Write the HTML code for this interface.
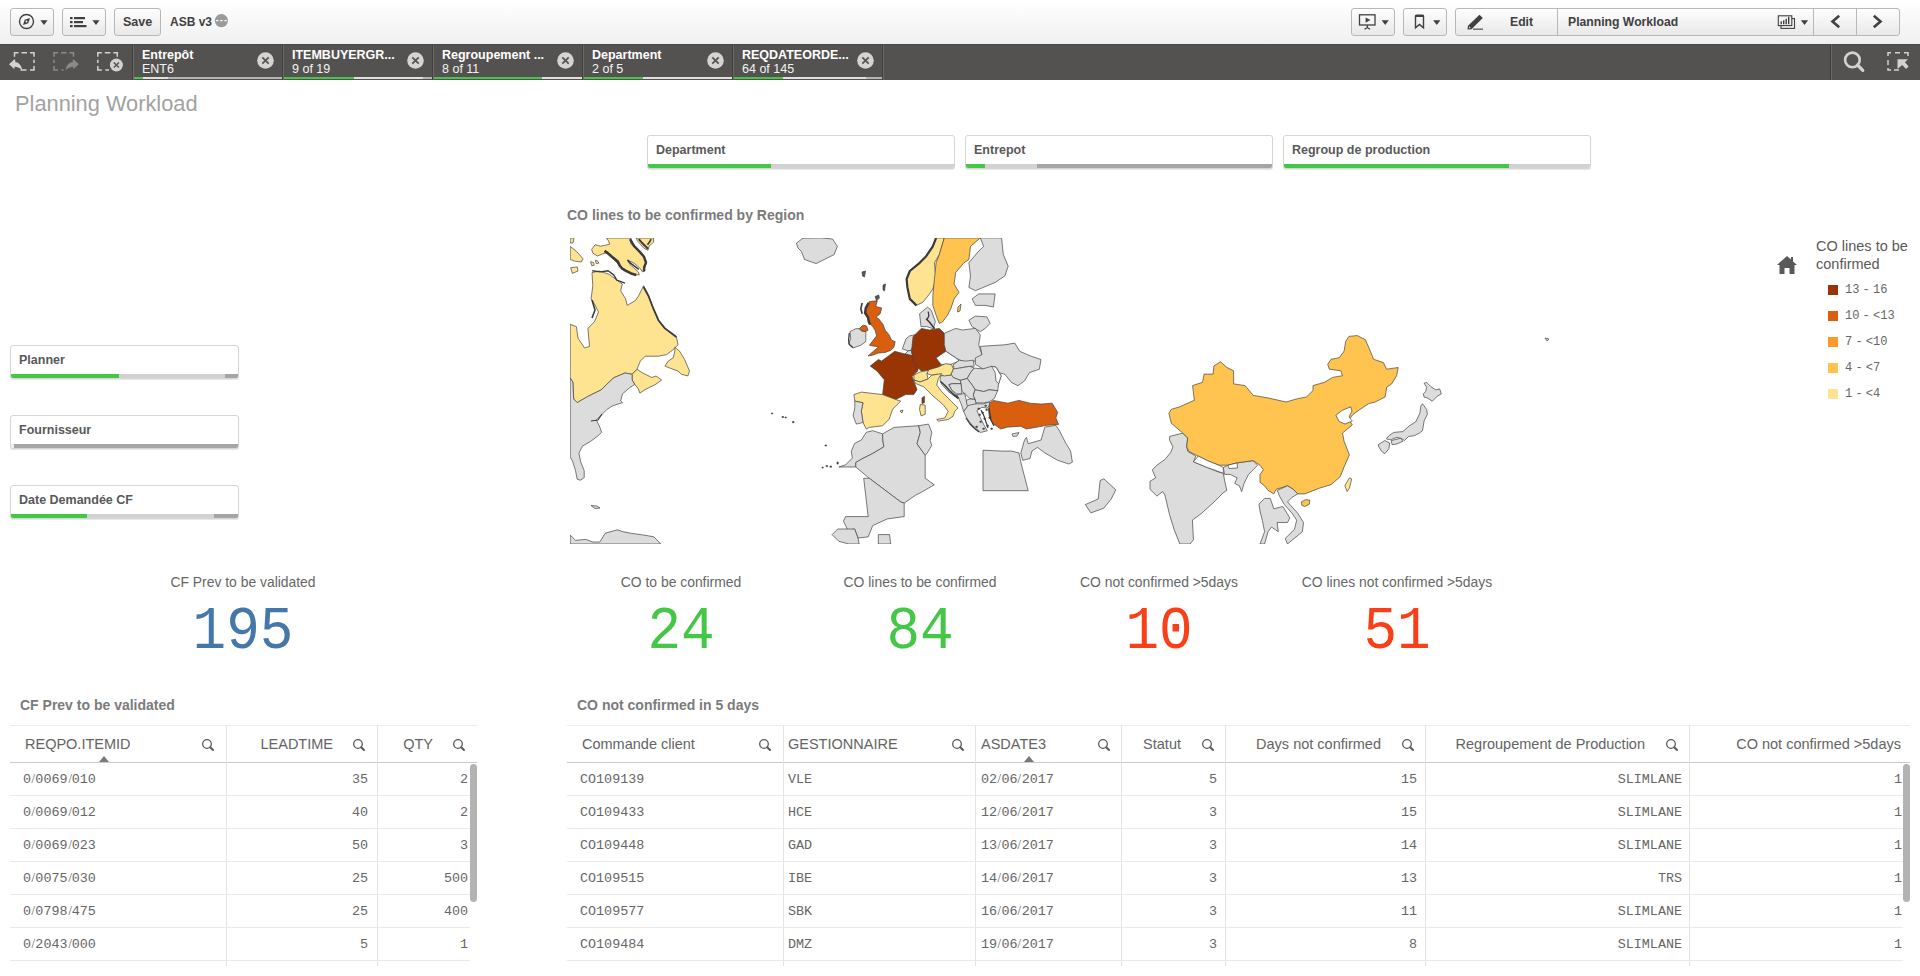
<!DOCTYPE html><html><head><meta charset="utf-8"><style>
*{box-sizing:border-box;margin:0;padding:0}
html,body{width:1920px;height:976px;overflow:hidden;background:#fff;font-family:"Liberation Sans",sans-serif;color:#595959}
body{position:relative}
.abs{position:absolute}
#top{position:absolute;left:0;top:0;width:1920px;height:44px;background:linear-gradient(#ffffff,#f0f0f0)}
.btn{position:absolute;top:8px;height:28px;border:1px solid #b8b8b8;border-radius:3px;background:linear-gradient(#fefefe,#e8e8e8)}
.caret{position:absolute;width:0;height:0;border-left:4px solid transparent;border-right:4px solid transparent;border-top:5px solid #404040}
#sel{position:absolute;left:0;top:44px;width:1920px;height:36px;background:#545250}
.tab{position:absolute;top:0;width:149px;height:36px;color:#fff}
.tab .t1{position:absolute;left:8px;top:4px;font-size:12.5px;font-weight:bold;white-space:nowrap}
.tab .t2{position:absolute;left:8px;top:18px;font-size:12.5px;white-space:nowrap;color:#f2f2f2}
.tab .x{position:absolute;left:124px;top:8px;width:17px;height:17px;border-radius:50%;background:#d2d2d2}
.tab .bar{position:absolute;left:0;top:33px;height:2px;width:148px;background:#b4b4b4;overflow:hidden}
.fp{position:absolute;height:34px;border:1px solid #d6d6d6;border-radius:3px;background:#fff;box-shadow:0 1px 1px rgba(0,0,0,.10)}
.fp .lbl{position:absolute;left:8px;top:7px;font-size:12.5px;font-weight:bold;color:#595959;white-space:nowrap}
.fp .b{position:absolute;left:0;bottom:0;height:4px;right:0;background:#d2d2d2;border-radius:0 0 2px 2px;overflow:hidden}
.fp .b i{position:absolute;top:0;height:4px}
.kl{position:absolute;font-size:13.9px;color:#666;white-space:nowrap}
.kn{position:absolute;font-family:"Liberation Mono",monospace;font-size:56px;white-space:nowrap;line-height:56px;transform:scaleY(1.1);transform-origin:0 0}
.ttl{position:absolute;font-size:14px;font-weight:bold;color:#7b7b7b;white-space:nowrap}
.hd{position:absolute;font-size:14.5px;color:#646464;white-space:nowrap}
.cell{position:absolute;font-family:"Liberation Mono",monospace;font-size:13.4px;color:#666666;white-space:nowrap}
.hl{position:absolute;height:1px;background:#e6e6e6}
.vl{position:absolute;width:1px;background:#e6e6e6}
</style></head><body>
<div id="top">
<div class="btn" style="left:10px;width:44px"></div>
<div class="btn" style="left:62px;width:44px"></div>
<div class="btn" style="left:114px;width:47px"></div>
<div class="btn" style="left:1351px;width:44px"></div>
<div class="btn" style="left:1403px;width:44px"></div>
<div class="btn" style="left:1455px;width:445px"></div>
<div class="abs" style="left:123px;top:15px;font-size:12.5px;font-weight:bold;color:#404040;white-space:nowrap">Save</div>
<div class="abs" style="left:170px;top:15px;font-size:12px;font-weight:bold;color:#404040;white-space:nowrap">ASB v3</div>
<div class="abs" style="left:1510px;top:15px;font-size:12.2px;font-weight:bold;color:#404040;white-space:nowrap">Edit</div>
<div class="abs" style="left:1568px;top:15px;font-size:12.2px;font-weight:bold;color:#404040;white-space:nowrap">Planning Workload</div>
<div class="abs" style="left:1557px;top:9px;width:1px;height:26px;background:#b8b8b8"></div>
<div class="abs" style="left:1813px;top:9px;width:1px;height:26px;background:#b8b8b8"></div>
<div class="abs" style="left:1856px;top:9px;width:1px;height:26px;background:#b8b8b8"></div>
<svg class="abs" style="left:0;top:0" width="1920" height="44" viewBox="0 0 1920 44"><circle cx="26.5" cy="21.5" r="7" fill="none" stroke="#404040" stroke-width="1.4"/><path d="M30,17.9 L28.3,23.3 L23,25.1 L24.7,19.7 Z" fill="#404040"/><circle cx="26.5" cy="21.5" r="0.9" fill="#fff"/><path d="M40.4,20.2 L47.6,20.2 L44,24.9 Z" fill="#404040"/><rect x="70" y="17" width="2.6" height="2.2" fill="#404040"/><rect x="74" y="17" width="11" height="2.2" fill="#404040"/><rect x="70" y="21" width="2.6" height="2.2" fill="#404040"/><rect x="74" y="21" width="9" height="2.2" fill="#404040"/><rect x="70" y="25" width="2.6" height="2.2" fill="#404040"/><rect x="74" y="25" width="12.5" height="2.2" fill="#404040"/><path d="M92.4,20.2 L99.6,20.2 L96,24.9 Z" fill="#404040"/><circle cx="221.4" cy="20.6" r="6.6" fill="#9a9a9a"/><rect x="216" y="20" width="2.4" height="1.2" fill="#fff"/><rect x="220.2" y="20" width="2.4" height="1.2" fill="#fff"/><rect x="224.4" y="20" width="2.4" height="1.2" fill="#fff"/><rect x="1359.5" y="14.8" width="15.5" height="10.2" fill="none" stroke="#404040" stroke-width="1.3"/><path d="M1365.6,17.4 L1370.4,20.1 L1365.6,22.8 Z" fill="#404040"/><path d="M1367.3,25 L1367.3,27.5 M1364.6,29.3 L1367.3,27.5 L1370,29.3" stroke="#404040" stroke-width="1.3" fill="none"/><path d="M1381.6000000000001,20.2 L1388.8,20.2 L1385.2,24.9 Z" fill="#404040"/><path d="M1414.8,16 Q1414.8,14.5 1416.3,14.5 L1422.7,14.5 Q1424.2,14.5 1424.2,16 L1424.2,29.2 L1419.5,25.5 L1414.8,29.2 Z M1416.2,17 L1416.2,26.3 L1419.5,23.6 L1422.8,26.3 L1422.8,17 Z" fill="#404040" fill-rule="evenodd"/><path d="M1433.2,20.2 L1440.3999999999999,20.2 L1436.8,24.9 Z" fill="#404040"/><path d="M1479.5,14.8 L1482.8,18.1 L1471.5,29.2 L1467.5,29.6 L1468,25.8 Z" fill="#404040"/><path d="M1469.5,26.2 L1470.6,28 L1468.9,28.3 Z" fill="#eee"/><rect x="1473" y="28.6" width="10" height="1.1" fill="#404040"/><rect x="1781" y="18.6" width="13.5" height="9.8" fill="#f4f4f4" stroke="#404040" stroke-width="1.1"/><rect x="1778.3" y="15.8" width="13.5" height="9.8" fill="#f4f4f4" stroke="#404040" stroke-width="1.1"/><rect x="1780.5" y="21.3" width="1.4" height="3" fill="#404040"/><rect x="1783" y="20.3" width="1.4" height="4" fill="#404040"/><rect x="1785.5" y="18.8" width="1.4" height="5.5" fill="#404040"/><rect x="1788" y="16.8" width="1.4" height="7.5" fill="#404040"/><path d="M1800.9,20.2 L1808.1,20.2 L1804.5,24.9 Z" fill="#404040"/><path d="M1839.2,15.8 L1832.5,21.5 L1839.2,27.2" fill="none" stroke="#404040" stroke-width="2.6"/><path d="M1873.8,15.8 L1880.5,21.5 L1873.8,27.2" fill="none" stroke="#404040" stroke-width="2.6"/></svg>
</div>
<div id="sel">
<div class="tab" style="left:134px"><div class="t1">Entrepôt</div><div class="t2">ENT6</div><svg class="abs" style="left:123px;top:8px" width="17" height="17" viewBox="0 0 17 17"><circle cx="8.5" cy="8.5" r="8.3" fill="#d4d4d4"/><path d="M5.3,5.3 L11.7,11.7 M11.7,5.3 L5.3,11.7" stroke="#545250" stroke-width="1.7"/></svg><div class="bar"><i class="abs" style="left:0px;top:0;width:9px;height:3px;background:#46c646"></i><i class="abs" style="left:9px;top:0;width:25px;height:3px;background:#e0e0e0"></i></div></div>
<div class="abs" style="left:132px;top:0;width:1px;height:36px;background:#434140"></div><div class="abs" style="left:133px;top:0;width:1px;height:36px;background:#6b6967"></div>
<div class="tab" style="left:284px"><div class="t1">ITEMBUYERGR...</div><div class="t2">9 of 19</div><svg class="abs" style="left:123px;top:8px" width="17" height="17" viewBox="0 0 17 17"><circle cx="8.5" cy="8.5" r="8.3" fill="#d4d4d4"/><path d="M5.3,5.3 L11.7,11.7 M11.7,5.3 L5.3,11.7" stroke="#545250" stroke-width="1.7"/></svg><div class="bar"><i class="abs" style="left:0px;top:0;width:70px;height:3px;background:#46c646"></i><i class="abs" style="left:70px;top:0;width:69px;height:3px;background:#e0e0e0"></i></div></div>
<div class="abs" style="left:282px;top:0;width:1px;height:36px;background:#434140"></div><div class="abs" style="left:283px;top:0;width:1px;height:36px;background:#6b6967"></div>
<div class="tab" style="left:434px"><div class="t1">Regroupement ...</div><div class="t2">8 of 11</div><svg class="abs" style="left:123px;top:8px" width="17" height="17" viewBox="0 0 17 17"><circle cx="8.5" cy="8.5" r="8.3" fill="#d4d4d4"/><path d="M5.3,5.3 L11.7,11.7 M11.7,5.3 L5.3,11.7" stroke="#545250" stroke-width="1.7"/></svg><div class="bar"><i class="abs" style="left:0px;top:0;width:108px;height:3px;background:#46c646"></i><i class="abs" style="left:108px;top:0;width:40px;height:3px;background:#e0e0e0"></i></div></div>
<div class="abs" style="left:432px;top:0;width:1px;height:36px;background:#434140"></div><div class="abs" style="left:433px;top:0;width:1px;height:36px;background:#6b6967"></div>
<div class="tab" style="left:584px"><div class="t1">Department</div><div class="t2">2 of 5</div><svg class="abs" style="left:123px;top:8px" width="17" height="17" viewBox="0 0 17 17"><circle cx="8.5" cy="8.5" r="8.3" fill="#d4d4d4"/><path d="M5.3,5.3 L11.7,11.7 M11.7,5.3 L5.3,11.7" stroke="#545250" stroke-width="1.7"/></svg><div class="bar"><i class="abs" style="left:0px;top:0;width:59px;height:3px;background:#46c646"></i><i class="abs" style="left:59px;top:0;width:90px;height:3px;background:#e0e0e0"></i></div></div>
<div class="abs" style="left:582px;top:0;width:1px;height:36px;background:#434140"></div><div class="abs" style="left:583px;top:0;width:1px;height:36px;background:#6b6967"></div>
<div class="tab" style="left:734px"><div class="t1">REQDATEORDE...</div><div class="t2">64 of 145</div><svg class="abs" style="left:123px;top:8px" width="17" height="17" viewBox="0 0 17 17"><circle cx="8.5" cy="8.5" r="8.3" fill="#d4d4d4"/><path d="M5.3,5.3 L11.7,11.7 M11.7,5.3 L5.3,11.7" stroke="#545250" stroke-width="1.7"/></svg><div class="bar"><i class="abs" style="left:0px;top:0;width:49px;height:3px;background:#46c646"></i><i class="abs" style="left:49px;top:0;width:83px;height:3px;background:#e0e0e0"></i></div></div>
<div class="abs" style="left:732px;top:0;width:1px;height:36px;background:#434140"></div><div class="abs" style="left:733px;top:0;width:1px;height:36px;background:#6b6967"></div>
<div class="abs" style="left:882px;top:0;width:1px;height:36px;background:#434140"></div><div class="abs" style="left:883px;top:0;width:1px;height:36px;background:#6b6967"></div>
<div class="abs" style="left:0;top:0;width:1920px;height:1px;background:#4a4846"></div>
<div class="abs" style="left:1830px;top:0;width:1px;height:36px;background:#3f3e3d"></div><div class="abs" style="left:1831px;top:0;width:1px;height:36px;background:#6a6866"></div>
<svg class="abs" style="left:0;top:0" width="1920" height="36" viewBox="0 44 1920 36"><path d="M14.5,56.8 L14.5,52.8 L18.5,52.8 M21.5,52.8 L27,52.8 M30,52.8 L34,52.8 L34,56.8 M14.5,59.8 L14.5,63 M34,59.8 L34,63" fill="none" stroke="#d2d2d2" stroke-width="1.5"/><path d="M34,66 L34,70 L30,70 M26.5,70 L20.5,70" fill="none" stroke="#d2d2d2" stroke-width="1.5"/><path d="M9,64.2 L14.5,59.3 L14.5,62 Q21,62 22.3,70.5 Q19,66.8 14.5,66.8 L14.5,69.2 Z" fill="#d2d2d2"/><path d="M54,56.8 L54,52.8 L58,52.8 M61,52.8 L66.5,52.8 M69.5,52.8 L73.5,52.8 L73.5,56.8 M54,59.8 L54,63 M73.5,59.8 L73.5,63" fill="none" stroke="#8c8a88" stroke-width="1.5"/><path d="M54,66 L54,70 L58,70 M61.5,70 L63.5,70" fill="none" stroke="#8c8a88" stroke-width="1.5"/><path d="M78.8,64.2 L73.3,59.3 L73.3,62 Q66.8,62 65.5,70.5 Q68.8,66.8 73.3,66.8 L73.3,69.2 Z" fill="#8c8a88"/><path d="M97.8,56.8 L97.8,52.8 L101.8,52.8 M104.8,52.8 L110.3,52.8 M113.3,52.8 L117.3,52.8 L117.3,56.8 M97.8,59.8 L97.8,63 M117.3,59.8 L117.3,63" fill="none" stroke="#d2d2d2" stroke-width="1.5"/><path d="M97.8,66 L97.8,70 L101.8,70 M105.3,70 L109,70" fill="none" stroke="#d2d2d2" stroke-width="1.5"/><circle cx="116.4" cy="65" r="6.5" fill="#d2d2d2"/><path d="M113.8,62.4 L119,67.6 M119,62.4 L113.8,67.6" stroke="#545250" stroke-width="1.4"/><circle cx="1852.4" cy="59.9" r="7.3" fill="none" stroke="#d2d2d2" stroke-width="2.6"/><path d="M1857.5,65 L1862.8,70.3" stroke="#d2d2d2" stroke-width="3.2" stroke-linecap="round"/><path d="M1888,56 L1888,52.8 L1891,52.8 M1895,52.8 L1900,52.8 M1904,52.8 L1908,52.8 L1908,56 M1888,60 L1888,65 M1888,68 L1888,70 L1891,70 M1894,70 L1899,70" fill="none" stroke="#d2d2d2" stroke-width="1.5"/><path d="M1897.5,59.2 L1907.8,59.2 L1905,62.3 L1908.6,66.5 L1906,69 L1902.2,65 L1897.5,69 Z" fill="#d2d2d2"/></svg>
</div>
<div class="abs" style="left:15px;top:91px;font-size:21.8px;color:#a2a2a2;white-space:nowrap">Planning Workload</div>
<div class="fp" style="left:647px;top:135px;width:308px"><div class="lbl">Department</div><div class="b"><i style="left:0px;width:123px;background:#46c646"></i></div></div>
<div class="fp" style="left:965px;top:135px;width:308px"><div class="lbl">Entrepot</div><div class="b"><i style="left:0px;width:19px;background:#46c646"></i><i style="left:71px;width:237px;background:#a5a5a5"></i></div></div>
<div class="fp" style="left:1283px;top:135px;width:308px"><div class="lbl">Regroup de production</div><div class="b"><i style="left:0px;width:225px;background:#46c646"></i></div></div>
<div class="fp" style="left:10px;top:345px;width:229px"><div class="lbl">Planner</div><div class="b"><i style="left:0px;width:108px;background:#46c646"></i><i style="left:214px;width:14px;background:#a5a5a5"></i></div></div>
<div class="fp" style="left:10px;top:415px;width:229px"><div class="lbl">Fournisseur</div><div class="b"><i style="left:0px;width:3px;background:#f0f0f0"></i><i style="left:3px;width:226px;background:#a5a5a5"></i></div></div>
<div class="fp" style="left:10px;top:485px;width:229px"><div class="lbl">Date Demandée CF</div><div class="b"><i style="left:0px;width:76px;background:#46c646"></i><i style="left:203px;width:25px;background:#a5a5a5"></i></div></div>
<div class="ttl" style="left:567px;top:207px">CO lines to be confirmed by Region</div>
<svg class="abs" style="left:0;top:0" width="1920" height="976" viewBox="0 0 1920 976"><defs><clipPath id="mc"><rect x="570" y="238" width="1000" height="306"/></clipPath></defs><g clip-path="url(#mc)" stroke="#444" stroke-width="0.7" stroke-linejoin="round"><path fill="#fee391" d="M570.2,324.3 576.4,326.7 578.0,338.2 584.6,348.0 589.5,346.4 587.9,328.4 594.4,321.8 598.5,312.0 594.4,303.8 591.1,298.9 592.8,285.7 592.0,272.6 599.3,271.0 609.2,274.3 615.7,279.2 622.3,284.1 620.7,290.7 625.6,298.9 627.2,305.4 635.4,300.5 638.7,295.6 643.6,285.7 648.5,295.6 653.4,308.7 658.4,320.2 664.9,328.4 671.5,333.3 676.4,336.6 678.0,344.8 673.1,349.7 666.6,354.6 658.4,356.2 645.2,356.2 640.3,361.1 637.0,369.3 632.1,374.3 625.0,373.0 614.0,377.6 607.0,384.0 601.0,390.0 596.4,392.2 587.6,396.6 577.2,402.6 573.7,399.0 572.8,382.0 570.2,378.0Z"/><path fill="#fee391" d="M637.0,369.3 642.0,372.6 651.8,377.5 656.0,376.0 661.7,380.0 655.6,384.4 645.1,389.6 639.9,393.1 638.2,388.7 634.7,384.4 632.1,380.0 632.1,374.3Z"/><path fill="#fee391" d="M674.8,347.2 679.7,351.3 684.6,359.5 689.5,371.0 687.9,375.9 681.3,374.3 678.0,371.0 673.1,369.3 664.9,366.1 668.2,361.1 673.1,357.9 674.8,351.3Z"/><path fill="#fee391" d="M606.5,238.0 631.1,238.0 630.1,240.1 631.1,244.2 634.2,247.3 639.3,251.4 643.9,257.5 646.5,261.6 643.9,266.7 644.9,270.8 642.4,271.9 640.3,268.8 637.3,265.7 633.2,262.6 627.5,260.1 630.1,264.7 633.7,267.8 638.3,271.9 639.3,274.9 635.2,274.9 630.1,272.9 625.0,269.8 620.9,267.8 616.8,262.6 611.6,257.5 606.5,252.9 602.4,253.9 597.3,256.0 592.7,252.9 591.7,249.3 595.2,244.7 600.4,246.2 605.5,245.2 609.6,244.2 608.6,241.1Z"/><path fill="#fee391" d="M636.2,238.0 653.6,238.0 653.6,242.1 649.0,246.2 648.0,250.3 643.9,248.3 640.3,244.2 637.3,240.6Z"/><path fill="#fee391" d="M590.6,261.6 593.7,262.6 594.2,265.2 591.7,265.7Z"/><path fill="#fee391" d="M595.2,260.1 597.8,261.1 598.8,263.2 596.3,263.7Z"/><path fill="#fee391" d="M570.2,246.4 576.4,251.3 583.0,258.7 581.3,262.0 574.8,261.1 570.2,259.5Z"/><path fill="#fee391" d="M570.7,267.7 577.2,266.9 578.0,271.0 572.3,273.4Z"/><path fill="#fee391" d="M570.2,237.9 574.0,237.9 573.0,243.0 570.2,243.0Z"/><path fill="#dcdcdc" d="M570.2,378.0 572.8,382.0 573.7,399.0 577.2,402.6 587.6,396.6 596.4,392.2 601.0,390.0 607.0,384.0 614.0,377.6 625.0,373.0 632.1,374.3 632.1,380.0 634.7,384.4 629.5,387.8 622.5,393.9 620.7,400.9 622.5,402.6 612.0,406.1 606.8,409.6 601.6,414.8 596.4,420.0 599.8,427.0 601.6,432.3 598.1,435.7 591.1,441.0 582.4,446.2 578.9,453.2 580.7,461.9 584.2,470.6 584.2,477.6 580.7,480.2 577.2,479.3 575.5,470.6 572.8,461.9 570.2,456.7Z"/><path fill="#dcdcdc" d="M591.0,505.5 597.0,506.0 600.0,508.0 595.0,508.5Z"/><path fill="#dcdcdc" d="M570.2,535.0 575.5,540.3 585.9,539.4 592.9,542.0 599.8,542.0 605.1,533.3 617.3,529.8 622.5,531.6 631.2,533.3 643.4,535.0 653.9,536.8 660.8,544.0 570.2,544.0Z"/><path fill="#dcdcdc" d="M796.4,243.1 803.0,238.2 821.0,237.9 832.5,239.0 837.4,246.4 834.1,254.6 824.3,259.5 816.1,263.6 804.6,259.5 801.3,251.3 798.0,248.0Z"/><path fill="#dcdcdc" d="M850.0,331.6 855.8,328.7 859.3,328.7 861.5,330.9 865.8,331.6 865.8,341.6 860.8,345.2 852.9,348.1 848.6,343.8 850.7,338.8Z"/><path fill="#d95f0e" d="M859.3,328.7 862.9,325.2 866.5,325.9 868.0,330.2 865.8,331.6 861.5,330.9Z"/><path fill="#d95f0e" d="M869.4,301.5 877.3,300.8 875.8,306.5 881.6,307.9 880.2,313.7 875.8,317.3 878.7,318.7 883.0,324.4 885.2,330.2 888.8,334.5 891.6,340.2 895.2,341.6 893.8,347.4 890.9,350.3 885.2,352.4 878.0,353.1 872.3,355.3 868.0,356.0 873.7,351.0 878.7,346.7 873.0,346.0 869.4,345.2 873.7,339.5 876.6,335.9 875.1,330.2 872.3,325.9 870.1,324.4 868.7,321.6 868.0,317.3 865.1,313.0 865.8,307.9 868.0,304.3Z"/><path fill="#555" d="M875.1,296.5 878.7,295.0 879.4,297.9 876.6,300.8Z"/><path fill="#555" d="M862.0,272.0 865.5,271.0 864.5,277.0 862.5,276.0Z"/><path fill="#555" d="M883.0,285.0 885.5,284.0 884.5,291.0 883.0,290.0Z"/><path fill="#fee391" d="M906.6,279.2 909.8,271.0 919.7,262.8 926.2,256.2 932.8,246.4 936.1,237.9 944.3,237.9 939.3,254.6 934.4,262.8 936.1,279.2 932.8,289.0 929.5,293.9 923.0,302.1 916.4,305.4 909.8,298.9 907.4,287.4Z"/><path fill="#fec44f" d="M944.3,237.9 980.3,237.9 970.5,246.4 968.9,259.5 963.9,262.8 955.7,272.6 954.1,284.1 959.0,292.3 954.1,298.9 950.8,308.7 947.5,315.2 942.6,321.8 939.3,323.4 936.1,315.2 932.8,305.4 932.8,295.6 934.4,279.2 936.1,262.8 939.3,254.6Z"/><path fill="#fec44f" d="M958.0,307.0 961.0,304.0 960.0,311.0 957.5,312.0Z"/><path fill="#dcdcdc" d="M980.3,237.9 1001.6,237.9 1003.3,254.6 1008.2,266.1 1004.9,275.9 995.1,282.5 985.2,286.6 975.4,290.7 968.9,287.4 970.5,275.9 968.9,262.8 977.0,253.0 983.6,246.4Z"/><path fill="#dcdcdc" d="M972.1,298.9 978.7,293.9 995.1,293.9 993.4,307.0 985.2,305.4 975.4,305.4Z"/><path fill="#dcdcdc" d="M968.9,320.2 975.4,316.1 986.9,316.9 990.2,323.4 985.2,328.4 980.3,331.6 972.1,326.7Z"/><path fill="#dcdcdc" d="M919.6,313.7 927.5,307.2 931.1,310.1 935.4,321.6 933.2,328.7 926.8,326.6 921.0,326.6Z"/><path fill="#dcdcdc" d="M902.4,348.8 906.0,338.8 909.6,335.9 916.0,334.5 913.9,344.5 911.0,350.3 908.1,351.0Z"/><path fill="#dcdcdc" d="M908.1,351.0 911.0,350.3 913.1,356.0 905.0,354.0Z"/><path fill="#993404" d="M870.2,366.1 878.4,359.5 881.6,361.1 894.8,351.3 905.0,354.0 913.1,356.0 914.4,357.9 919.3,362.8 917.7,371.0 912.1,376.6 917.0,389.7 913.8,394.6 905.6,394.6 895.7,399.5 882.6,394.6 884.3,379.8 877.0,371.0Z"/><path fill="#993404" d="M913.1,336.6 921.3,328.4 929.5,330.0 939.3,328.4 944.3,333.3 944.3,344.8 945.9,351.3 936.1,357.9 941.0,364.4 939.3,369.3 921.3,371.0 918.0,367.7 913.1,361.1 911.5,351.3Z"/><path fill="#dcdcdc" d="M944.3,333.3 955.7,328.4 962.3,330.0 975.4,328.4 980.3,334.9 978.7,344.8 982.0,354.6 975.4,361.1 965.6,362.8 955.7,357.9 945.9,351.3 944.3,344.8Z"/><path fill="#ffffff" d="M936.1,357.9 945.9,351.3 955.7,357.9 959.0,361.1 950.8,364.4 941.0,364.4Z"/><path fill="#dcdcdc" d="M980.3,346.4 991.8,345.6 1004.9,344.8 1014.8,343.1 1019.7,351.3 1031.1,356.2 1041.0,359.5 1039.3,369.3 1029.5,372.6 1024.6,380.8 1018.0,385.7 1011.5,382.5 1004.9,374.3 998.4,372.6 991.8,367.7 983.6,369.3 975.4,364.4 975.4,357.9 982.0,354.6Z"/><path fill="#dcdcdc" d="M953.3,364.6 959.4,360.2 965.5,361.1 973.3,360.2 974.2,366.3 969.8,366.3 959.4,368.1 954.2,369.8Z"/><path fill="#dcdcdc" d="M953.3,368.9 959.4,368.1 969.8,366.3 974.2,368.1 970.7,372.4 967.2,378.5 960.3,380.3 953.3,377.6 950.7,375.0Z"/><path fill="#dcdcdc" d="M974.2,368.1 982.9,368.9 991.6,366.3 996.0,367.2 1001.2,375.9 998.6,383.7 997.7,390.7 989.0,389.8 983.8,391.6 975.1,389.8 972.5,385.5 967.2,378.5 970.7,372.4Z"/><path fill="#ffffff" d="M991.6,366.3 996.0,367.2 1001.2,375.9 998.6,383.7 996.0,381.1 995.1,372.4Z"/><path fill="#dcdcdc" d="M940.2,375.9 951.6,375.0 953.3,377.6 960.3,380.3 961.1,383.7 952.4,383.7 948.9,384.6 951.6,389.8 958.5,397.7 954.2,395.9 948.1,391.6 942.0,384.6 940.2,381.1Z"/><path fill="#dcdcdc" d="M948.9,384.6 952.4,383.7 961.1,383.7 962.0,391.6 961.1,394.2 956.8,394.2 951.6,389.8Z"/><path fill="#dcdcdc" d="M960.3,380.3 967.2,378.5 972.5,385.5 975.1,389.8 973.3,395.1 975.1,399.4 969.8,398.6 964.6,393.3 962.0,391.6 961.1,383.7Z"/><path fill="#dcdcdc" d="M956.8,394.2 961.1,394.2 964.6,393.3 966.4,400.3 968.1,405.5 963.7,411.6 961.1,403.8Z"/><path fill="#dcdcdc" d="M975.1,389.8 983.8,391.6 989.0,389.8 997.7,390.7 994.2,398.6 989.0,402.0 983.8,402.9 975.9,402.9 975.1,399.4 973.3,395.1Z"/><path fill="#dcdcdc" d="M966.4,400.3 969.8,399.0 975.1,399.4 975.9,402.9 975.1,406.0 969.8,406.4 966.8,404.7Z"/><path fill="#dcdcdc" d="M968.1,405.5 975.9,403.8 983.8,403.8 989.0,402.0 990.7,403.8 987.3,408.1 982.0,407.3 976.8,410.7 980.3,417.7 983.8,424.7 987.3,430.8 980.3,432.5 975.9,428.2 971.6,424.7 966.4,417.7 963.7,411.6Z"/><path fill="#fee391" d="M926.9,370.3 937.6,367.2 945.5,363.7 951.6,364.6 953.3,368.9 950.7,375.0 944.6,375.9 937.6,374.2 931.8,375.2 926.9,373.6Z"/><path fill="#fee391" d="M913.8,375.2 920.0,372.0 928.5,370.3 926.9,373.6 928.0,379.0 920.0,382.0 914.0,380.0Z"/><path fill="#fee391" d="M853.9,394.6 861.3,392.1 882.6,394.6 895.7,399.5 900.7,401.1 892.5,409.3 889.2,419.2 882.6,425.7 869.5,427.4 866.2,429.0 863.0,422.5 861.3,411.0 863.0,402.8 854.8,401.1Z"/><path fill="#dcdcdc" d="M854.8,401.1 863.0,402.8 861.3,411.0 863.0,422.5 856.4,424.1 853.1,415.9 854.8,407.7Z"/><path fill="#fee391" d="M920.0,382.0 928.0,379.0 931.8,375.2 941.6,373.6 938.4,378.5 936.7,385.1 941.6,391.6 951.5,401.5 958.0,408.0 954.8,411.3 953.1,416.2 948.2,419.5 938.4,421.1 936.7,419.5 944.9,417.9 948.2,411.3 943.3,404.8 931.8,394.9 923.6,386.7 915.4,383.4 914.0,380.0Z"/><path fill="#fee391" d="M920.3,404.4 925.2,405.2 925.2,414.3 921.1,415.9 919.5,409.3Z"/><path fill="#993404" d="M922.0,397.9 924.4,396.2 924.4,402.8 922.0,403.6Z"/><path fill="#fee391" d="M900.0,411.0 903.0,410.0 902.0,413.0Z"/><path fill="#d95f0e" d="M989.5,403.2 993.2,400.4 1007.9,403.2 1019.0,400.4 1030.0,403.2 1041.1,404.1 1052.2,403.2 1057.7,412.4 1055.9,417.9 1058.6,424.4 1046.6,425.3 1037.4,427.1 1026.4,429.0 1020.8,426.2 1007.9,427.1 1000.6,429.0 993.2,423.5 989.5,417.9 988.6,410.6Z"/><path fill="#dcdcdc" d="M1012.0,434.0 1019.0,432.5 1017.0,436.0 1013.0,436.5Z"/><path fill="#dcdcdc" d="M1020.8,452.9 1024.5,440.0 1026.4,437.3 1028.2,443.7 1041.1,440.0 1044.8,427.1 1055.9,425.3 1059.5,430.8 1065.1,441.9 1070.6,451.1 1072.4,462.2 1068.8,464.0 1057.7,460.3 1044.8,452.9 1037.4,447.4 1031.9,451.1 1030.0,458.5 1022.7,460.3Z"/><path fill="#dcdcdc" d="M983.0,450.2 1002.4,451.1 1011.6,451.1 1019.0,452.9 1020.8,462.2 1028.2,490.7 983.0,490.7Z"/><path fill="#dcdcdc" d="M1085.3,504.6 1098.2,499.0 1100.1,480.6 1103.8,478.8 1115.8,489.8 1111.2,499.0 1103.8,508.2 1090.9,512.9Z"/><path fill="#dcdcdc" d="M838.9,467.0 845.6,464.8 852.4,458.0 851.3,451.3 854.6,443.4 861.4,440.0 866.2,432.3 872.8,430.7 882.6,433.9 882.8,440.0 883.9,446.8 872.7,453.5 861.4,459.2 855.8,462.5 855.8,467.0Z"/><path fill="#dcdcdc" d="M882.6,433.9 894.1,427.4 918.7,425.7 920.3,432.3 917.0,443.8 925.2,455.2 925.2,478.2 934.3,484.8 920.0,493.0 915.5,495.2 904.2,503.1 900.8,502.0 869.3,478.3 855.8,467.0 855.8,462.5 861.4,459.2 872.7,453.5 883.9,446.8 882.8,440.0Z"/><path fill="#dcdcdc" d="M918.7,425.7 928.5,424.1 931.8,432.3 930.2,440.5 931.8,445.4 926.9,453.6 925.2,455.2 917.0,443.8 920.3,432.3Z"/><path fill="#dcdcdc" d="M863.7,478.3 869.3,478.3 900.8,502.0 904.2,503.1 904.2,516.6 887.3,518.9 872.7,525.6 868.2,536.9 858.0,538.0 854.6,529.0 847.9,530.1 843.4,521.1 845.6,516.6 868.2,516.6Z"/><path fill="#dcdcdc" d="M832.1,534.6 837.7,529.0 854.6,529.0 858.0,538.0 859.2,544.0 849.0,544.0 838.9,541.4Z"/><path fill="#dcdcdc" d="M878.3,534.6 889.6,534.6 890.7,544.0 878.3,544.0Z"/><path fill="#555" d="M771.5,413.0 772.7,413.0 772.7,414.0 771.5,414.0Z"/><path fill="#555" d="M782.0,416.5 783.5,416.5 783.5,417.5 782.0,417.5Z"/><path fill="#555" d="M785.0,417.0 786.2,417.0 786.2,418.0 785.0,418.0Z"/><path fill="#555" d="M792.5,421.5 794.0,421.5 794.0,422.7 792.5,422.7Z"/><path fill="#555" d="M825.0,445.0 826.5,445.0 826.5,446.0 825.0,446.0Z"/><path fill="#555" d="M822.0,467.0 823.2,467.0 823.2,468.0 822.0,468.0Z"/><path fill="#555" d="M826.0,465.5 827.6,465.5 827.6,466.5 826.0,466.5Z"/><path fill="#555" d="M830.0,466.0 831.5,466.0 831.5,467.2 830.0,467.2Z"/><path fill="#555" d="M837.0,462.0 838.2,462.0 838.2,464.0 837.0,464.0Z"/><path fill="#dcdcdc" d="M1169.5,440.0 1172.9,446.9 1170.6,452.6 1164.9,459.5 1156.9,465.2 1152.3,469.8 1155.7,477.8 1150.0,481.3 1150.0,489.3 1156.9,496.1 1162.6,491.6 1164.9,495.0 1169.5,514.5 1174.1,529.4 1179.8,544.0 1190.1,544.0 1193.5,539.7 1192.4,520.2 1201.6,513.3 1214.2,501.9 1223.3,492.7 1226.8,490.4 1224.5,480.1 1223.3,473.2 1218.8,472.1 1207.3,467.5 1193.5,461.8 1195.8,456.0 1187.8,451.5 1186.7,446.9 1187.7,438.0 1182.8,433.1 1169.7,436.4Z"/><path fill="#dcdcdc" d="M1223.3,467.5 1227.9,465.2 1237.1,462.9 1253.1,460.6 1257.7,465.2 1253.1,469.8 1248.5,474.4 1244.0,483.5 1241.7,491.6 1239.4,485.8 1234.8,483.5 1237.1,477.8 1230.2,474.4 1224.5,474.4Z"/><path fill="#fec44f" d="M1168.9,413.4 1171.3,409.3 1179.5,406.9 1194.3,400.3 1192.6,385.6 1202.5,382.3 1204.1,374.1 1213.1,374.1 1213.9,365.9 1220.5,361.8 1227.0,367.5 1233.6,370.8 1233.6,383.9 1245.1,385.6 1253.3,395.4 1268.0,397.9 1286.1,402.0 1297.5,398.7 1306.4,397.0 1313.0,390.5 1313.0,385.6 1324.4,382.3 1332.6,377.4 1342.5,375.7 1340.8,370.8 1329.3,369.2 1327.7,364.3 1331.0,359.3 1339.2,357.7 1344.1,351.1 1345.7,341.3 1349.0,336.4 1357.2,335.6 1365.4,339.7 1370.3,351.1 1373.6,359.3 1383.4,362.6 1386.7,369.2 1398.2,367.5 1396.6,375.7 1391.6,383.9 1386.7,387.2 1385.1,397.0 1375.2,402.0 1368.7,403.6 1358.9,410.2 1352.3,415.1 1349.0,420.0 1352.3,424.9 1342.5,433.1 1344.1,441.3 1349.4,454.9 1344.8,465.2 1340.2,476.7 1331.0,484.7 1319.6,488.1 1304.7,493.9 1297.8,493.9 1293.2,489.3 1287.5,485.8 1276.1,489.3 1273.8,493.9 1268.0,490.4 1264.6,485.8 1260.0,482.4 1260.0,474.4 1263.4,469.8 1260.0,465.2 1253.1,460.6 1237.1,462.9 1227.9,465.2 1218.8,465.2 1207.3,460.6 1198.1,456.0 1189.0,451.5 1186.7,446.9 1187.7,438.0 1182.8,433.1 1171.3,423.3Z"/><path fill="#ffffff" d="M1335.9,415.1 1342.5,410.2 1350.7,406.9 1352.0,411.0 1349.0,417.0 1352.3,421.0 1345.0,424.0 1339.2,421.6Z"/><path fill="#ffffff" d="M1193.5,461.8 1198.1,456.0 1207.3,460.6 1218.8,465.2 1223.3,467.5 1223.3,473.2 1207.3,467.5Z"/><path fill="#ffffff" d="M1227.9,465.2 1237.1,462.9 1237.5,468.0 1229.0,468.5Z"/><path fill="#fec44f" d="M1301.3,501.9 1305.8,499.6 1309.8,500.2 1309.3,504.2 1304.7,506.5 1301.8,505.3Z"/><path fill="#fee391" d="M1344.8,485.8 1349.4,477.8 1351.7,479.0 1349.4,488.1 1347.1,491.6Z"/><path fill="#dcdcdc" d="M1258.9,504.2 1264.6,498.4 1270.3,498.4 1273.8,508.8 1282.9,506.5 1289.8,517.9 1287.5,522.5 1277.2,522.5 1278.3,531.7 1271.5,527.1 1268.0,531.7 1264.6,544.0 1260.0,544.0 1264.6,531.7 1262.3,520.2 1260.0,511.0Z"/><path fill="#dcdcdc" d="M1277.2,490.4 1287.5,485.8 1293.2,489.3 1297.8,493.9 1292.1,497.3 1287.5,501.9 1297.8,513.3 1303.5,522.5 1302.4,531.7 1287.5,544.0 1285.2,538.5 1294.4,529.4 1296.7,520.2 1292.1,513.3 1284.1,504.2 1279.5,496.1Z"/><path fill="#dcdcdc" d="M1426.6,382.4 1430.7,386.5 1435.6,389.8 1439.7,388.9 1441.3,393.9 1437.2,396.3 1432.3,401.2 1427.4,398.0 1424.1,397.1 1423.3,393.9 1425.7,391.4 1426.6,387.3 1424.1,383.2Z"/><path fill="#dcdcdc" d="M1422.5,403.7 1426.6,409.4 1427.4,414.3 1424.1,420.9 1422.5,430.7 1419.2,433.2 1414.3,435.7 1408.5,436.5 1404.4,440.6 1402.0,438.9 1397.0,437.3 1390.5,439.8 1386.4,438.9 1388.9,435.7 1393.8,432.4 1402.8,431.6 1409.3,425.8 1415.9,421.7 1420.0,412.7 1420.8,406.1Z"/><path fill="#dcdcdc" d="M1391.3,440.6 1401.1,438.1 1402.8,441.4 1397.0,443.9 1392.1,444.7Z"/><path fill="#dcdcdc" d="M1378.2,444.7 1384.8,440.6 1389.7,443.0 1388.9,448.8 1384.8,453.7 1381.5,451.2 1379.0,447.1Z"/><path fill="#dcdcdc" d="M1545.0,338.0 1549.0,339.0 1547.0,341.0Z"/><path fill="#555" d="M978.0,408.0 979.6,408.3 979.2,409.5 977.8,409.2Z"/><path fill="#555" d="M982.0,412.0 983.6,412.3 983.2,413.5 981.8,413.2Z"/><path fill="#555" d="M986.0,409.0 987.6,409.3 987.2,410.5 985.8,410.2Z"/><path fill="#555" d="M984.0,418.0 985.6,418.3 985.2,419.5 983.8,419.2Z"/><path fill="#555" d="M980.0,421.0 981.6,421.3 981.2,422.5 979.8,422.2Z"/><path fill="#555" d="M987.0,425.0 988.6,425.3 988.2,426.5 986.8,426.2Z"/><path fill="#555" d="M983.0,428.0 984.6,428.3 984.2,429.5 982.8,429.2Z"/><path fill="#555" d="M976.0,426.0 977.6,426.3 977.2,427.5 975.8,427.2Z"/><path fill="#555" d="M989.0,417.0 990.6,417.3 990.2,418.5 988.8,418.2Z"/><path fill="#555" d="M985.0,405.0 986.6,405.3 986.2,406.5 984.8,406.2Z"/><path fill="#555" d="M991.0,428.0 992.6,428.3 992.2,429.5 990.8,429.2Z"/><path fill="#555" d="M979.0,414.0 980.6,414.3 980.2,415.5 978.8,415.2Z"/><path fill="none" stroke-width="1.8" stroke="#3a3a3a" d="M643.6,287.0 648.5,296.0 653.4,308.7 658.4,320.2 664.9,328.4 671.5,333.3 676.4,337.0"/><path fill="none" stroke-width="2.6" stroke="#3a3a3a" d="M604.5,250.9 608.1,253.4 611.6,256.5 614.7,259.1 617.8,261.6 619.8,265.7 621.9,268.3 626.0,270.8 631.1,273.4 636.2,274.9"/><path fill="none" stroke-width="2.4" stroke="#3a3a3a" d="M630.1,239.1 632.1,242.7 634.2,246.2 639.3,251.4 643.9,256.5 646.0,262.6 644.4,266.7 643.9,271.3"/><path fill="none" stroke-width="1.6" stroke="#3a3a3a" d="M627.5,260.1 631.1,263.7 635.2,266.7 638.8,269.3"/><path fill="none" stroke-width="2.0" stroke="#3a3a3a" d="M638.8,239.1 641.4,242.1 643.9,244.7 648.0,248.8"/><path fill="none" stroke-width="1.6" stroke="#3a3a3a" d="M651.1,239.1 649.5,242.1 647.5,244.7"/><path fill="none" stroke-width="1.4" stroke="#3a3a3a" d="M592.2,270.8 600.4,271.9 608.1,270.8 613.7,274.9 616.8,280.1 625.0,283.1"/><path fill="none" stroke-width="1.6" stroke="#3a3a3a" d="M592.0,300.0 595.0,310.0 592.0,318.0"/><path fill="none" stroke-width="2.2" stroke="#3a3a3a" d="M916.4,305.4 909.8,298.9 907.4,287.4 906.6,279.2 909.8,271.0 919.7,262.8 926.2,256.2 932.8,246.4 936.1,237.9"/><path fill="none" stroke-width="2.4" stroke="#3a3a3a" d="M868.7,302.9 865.8,307.9 865.1,313.0 868.0,317.3 868.7,321.6 870.1,324.4"/><path fill="none" stroke-width="1.6" stroke="#3a3a3a" d="M862.2,302.9 860.8,308.7 862.2,313.7"/><path fill="none" stroke-width="1.3" stroke="#3a3a3a" d="M849.3,333.0 848.6,340.2 849.3,344.5 852.9,347.4"/><path fill="none" stroke-width="1.6" stroke="#3a3a3a" d="M926.1,318.7 929.6,322.3 932.5,325.9 934.7,328.7"/><path fill="none" stroke-width="1.3" stroke="#3a3a3a" d="M928.2,311.5 928.9,315.8 926.8,320.1"/><path fill="none" stroke-width="1.6" stroke="#3a3a3a" d="M940.5,381.5 945.0,385.5 949.0,390.0 954.0,395.0 958.5,398.5"/><path fill="none" stroke-width="1.2" stroke="#3a3a3a" d="M966.0,418.0 970.0,424.0 974.0,428.0 979.0,432.0"/><path fill="none" stroke-width="1.2" stroke="#3a3a3a" d="M981.0,410.0 984.0,416.0 986.0,422.0 988.0,428.0"/><path fill="none" stroke-width="1.3" stroke="#3a3a3a" d="M989.0,408.0 990.0,414.0 991.0,420.0 994.0,426.0"/><path fill="none" stroke-width="1.2" stroke="#3a3a3a" d="M591.0,421.0 598.0,420.0 602.0,414.0"/></g></svg>
<div class="abs" style="left:1816px;top:237px;font-size:14.5px;line-height:18px;color:#595959;width:110px">CO lines to be<br>confirmed</div>
<svg class="abs" style="left:1776px;top:255px" width="22" height="20" viewBox="0 0 22 20"><path fill="#595959" d="M11 1 L1 10 L3.5 10 L3.5 19 L8.5 19 L8.5 13 L13.5 13 L13.5 19 L18.5 19 L18.5 10 L21 10 L17 6.4 L17 2 L15 2 L15 4.6 Z"/></svg>
<div class="abs" style="left:1828px;top:285px;width:10px;height:10px;background:#993404"></div>
<div class="abs" style="left:1845px;top:283px;font-family:'Liberation Mono',monospace;font-size:12px;color:#666;white-space:nowrap;word-spacing:-4px">13 - 16</div>
<div class="abs" style="left:1828px;top:311px;width:10px;height:10px;background:#d95f0e"></div>
<div class="abs" style="left:1845px;top:309px;font-family:'Liberation Mono',monospace;font-size:12px;color:#666;white-space:nowrap;word-spacing:-4px">10 - &lt;13</div>
<div class="abs" style="left:1828px;top:337px;width:10px;height:10px;background:#fe9929"></div>
<div class="abs" style="left:1845px;top:335px;font-family:'Liberation Mono',monospace;font-size:12px;color:#666;white-space:nowrap;word-spacing:-4px">7 - &lt;10</div>
<div class="abs" style="left:1828px;top:363px;width:10px;height:10px;background:#fec44f"></div>
<div class="abs" style="left:1845px;top:361px;font-family:'Liberation Mono',monospace;font-size:12px;color:#666;white-space:nowrap;word-spacing:-4px">4 - &lt;7</div>
<div class="abs" style="left:1828px;top:389px;width:10px;height:10px;background:#fee391"></div>
<div class="abs" style="left:1845px;top:387px;font-family:'Liberation Mono',monospace;font-size:12px;color:#666;white-space:nowrap;word-spacing:-4px">1 - &lt;4</div>
<div class="kl" style="left:93px;width:300px;text-align:center;top:574px">CF Prev to be validated</div>
<div class="kn" style="left:93px;width:300px;text-align:center;top:601px;color:#4477aa">195</div>
<div class="kl" style="left:531px;width:300px;text-align:center;top:574px">CO to be confirmed</div>
<div class="kn" style="left:531px;width:300px;text-align:center;top:601px;color:#46c646">24</div>
<div class="kl" style="left:770px;width:300px;text-align:center;top:574px">CO lines to be confirmed</div>
<div class="kn" style="left:770px;width:300px;text-align:center;top:601px;color:#46c646">84</div>
<div class="kl" style="left:1009px;width:300px;text-align:center;top:574px">CO not confirmed >5days</div>
<div class="kn" style="left:1009px;width:300px;text-align:center;top:601px;color:#f93f17">10</div>
<div class="kl" style="left:1247px;width:300px;text-align:center;top:574px">CO lines not confirmed >5days</div>
<div class="kn" style="left:1247px;width:300px;text-align:center;top:601px;color:#f93f17">51</div>
<div class="ttl" style="left:20px;top:697px">CF Prev to be validated</div>
<div class="ttl" style="left:577px;top:697px">CO not confirmed in 5 days</div>
<div class="hl" style="left:10px;top:725px;width:467px;background:#ececec"></div>
<div class="hl" style="left:10px;top:762px;width:467px;height:1px;background:#cacaca"></div>
<div class="vl" style="left:226px;top:726px;height:240px;background:#e4e4e4"></div>
<div class="vl" style="left:377px;top:726px;height:240px;background:#e4e4e4"></div>
<div class="hl" style="left:10px;top:795px;width:460px;background:#eaeaea"></div>
<div class="hl" style="left:10px;top:828px;width:460px;background:#eaeaea"></div>
<div class="hl" style="left:10px;top:861px;width:460px;background:#eaeaea"></div>
<div class="hl" style="left:10px;top:894px;width:460px;background:#eaeaea"></div>
<div class="hl" style="left:10px;top:927px;width:460px;background:#eaeaea"></div>
<div class="hl" style="left:10px;top:960px;width:460px;background:#eaeaea"></div>
<div class="hd" style="left:25px;top:736px">REQPO.ITEMID</div>
<svg class="abs" style="left:201px;top:738px" width="14" height="14" viewBox="0 0 14 14"><circle cx="6" cy="6" r="4.3" fill="none" stroke="#595959" stroke-width="1.3"/><line x1="9.2" y1="9.2" x2="12" y2="12" stroke="#595959" stroke-width="2" stroke-linecap="round"/></svg>
<div class="hd" style="right:1587px;top:736px">LEADTIME</div>
<svg class="abs" style="left:352px;top:738px" width="14" height="14" viewBox="0 0 14 14"><circle cx="6" cy="6" r="4.3" fill="none" stroke="#595959" stroke-width="1.3"/><line x1="9.2" y1="9.2" x2="12" y2="12" stroke="#595959" stroke-width="2" stroke-linecap="round"/></svg>
<div class="hd" style="right:1487px;top:736px">QTY</div>
<svg class="abs" style="left:452px;top:738px" width="14" height="14" viewBox="0 0 14 14"><circle cx="6" cy="6" r="4.3" fill="none" stroke="#595959" stroke-width="1.3"/><line x1="9.2" y1="9.2" x2="12" y2="12" stroke="#595959" stroke-width="2" stroke-linecap="round"/></svg>
<div class="cell" style="left:23px;top:772px">0<span style="display:inline-block;width:4.3px;transform:scaleX(0.55);transform-origin:0 50%">/</span>0069<span style="display:inline-block;width:4.3px;transform:scaleX(0.55);transform-origin:0 50%">/</span>010</div>
<div class="cell" style="right:1552px;top:772px">35</div>
<div class="cell" style="right:1452px;top:772px">2</div>
<div class="cell" style="left:23px;top:805px">0<span style="display:inline-block;width:4.3px;transform:scaleX(0.55);transform-origin:0 50%">/</span>0069<span style="display:inline-block;width:4.3px;transform:scaleX(0.55);transform-origin:0 50%">/</span>012</div>
<div class="cell" style="right:1552px;top:805px">40</div>
<div class="cell" style="right:1452px;top:805px">2</div>
<div class="cell" style="left:23px;top:838px">0<span style="display:inline-block;width:4.3px;transform:scaleX(0.55);transform-origin:0 50%">/</span>0069<span style="display:inline-block;width:4.3px;transform:scaleX(0.55);transform-origin:0 50%">/</span>023</div>
<div class="cell" style="right:1552px;top:838px">50</div>
<div class="cell" style="right:1452px;top:838px">3</div>
<div class="cell" style="left:23px;top:871px">0<span style="display:inline-block;width:4.3px;transform:scaleX(0.55);transform-origin:0 50%">/</span>0075<span style="display:inline-block;width:4.3px;transform:scaleX(0.55);transform-origin:0 50%">/</span>030</div>
<div class="cell" style="right:1552px;top:871px">25</div>
<div class="cell" style="right:1452px;top:871px">500</div>
<div class="cell" style="left:23px;top:904px">0<span style="display:inline-block;width:4.3px;transform:scaleX(0.55);transform-origin:0 50%">/</span>0798<span style="display:inline-block;width:4.3px;transform:scaleX(0.55);transform-origin:0 50%">/</span>475</div>
<div class="cell" style="right:1552px;top:904px">25</div>
<div class="cell" style="right:1452px;top:904px">400</div>
<div class="cell" style="left:23px;top:937px">0<span style="display:inline-block;width:4.3px;transform:scaleX(0.55);transform-origin:0 50%">/</span>2043<span style="display:inline-block;width:4.3px;transform:scaleX(0.55);transform-origin:0 50%">/</span>000</div>
<div class="cell" style="right:1552px;top:937px">5</div>
<div class="cell" style="right:1452px;top:937px">1</div>
<div class="cell" style="left:23px;top:970px"></div>
<div class="cell" style="right:1552px;top:970px"></div>
<div class="cell" style="right:1452px;top:970px"></div>
<div class="abs" style="left:470px;top:764px;width:7px;height:138px;border-radius:4px;background:#b3b3b3"></div>
<div class="abs" style="left:99px;top:756px;width:0;height:0;border-left:5px solid transparent;border-right:5px solid transparent;border-top:0;border-bottom:6px solid #7a7a7a"></div>
<div class="hl" style="left:567px;top:725px;width:1343px;background:#ececec"></div>
<div class="hl" style="left:567px;top:762px;width:1343px;height:1px;background:#cacaca"></div>
<div class="vl" style="left:783px;top:726px;height:240px;background:#e4e4e4"></div>
<div class="vl" style="left:975px;top:726px;height:240px;background:#e4e4e4"></div>
<div class="vl" style="left:1121px;top:726px;height:240px;background:#e4e4e4"></div>
<div class="vl" style="left:1225px;top:726px;height:240px;background:#e4e4e4"></div>
<div class="vl" style="left:1425px;top:726px;height:240px;background:#e4e4e4"></div>
<div class="vl" style="left:1689px;top:726px;height:240px;background:#e4e4e4"></div>
<div class="hl" style="left:567px;top:795px;width:1336px;background:#eaeaea"></div>
<div class="hl" style="left:567px;top:828px;width:1336px;background:#eaeaea"></div>
<div class="hl" style="left:567px;top:861px;width:1336px;background:#eaeaea"></div>
<div class="hl" style="left:567px;top:894px;width:1336px;background:#eaeaea"></div>
<div class="hl" style="left:567px;top:927px;width:1336px;background:#eaeaea"></div>
<div class="hl" style="left:567px;top:960px;width:1336px;background:#eaeaea"></div>
<div class="hd" style="left:582px;top:736px">Commande client</div>
<svg class="abs" style="left:758px;top:738px" width="14" height="14" viewBox="0 0 14 14"><circle cx="6" cy="6" r="4.3" fill="none" stroke="#595959" stroke-width="1.3"/><line x1="9.2" y1="9.2" x2="12" y2="12" stroke="#595959" stroke-width="2" stroke-linecap="round"/></svg>
<div class="hd" style="left:788px;top:736px">GESTIONNAIRE</div>
<svg class="abs" style="left:951px;top:738px" width="14" height="14" viewBox="0 0 14 14"><circle cx="6" cy="6" r="4.3" fill="none" stroke="#595959" stroke-width="1.3"/><line x1="9.2" y1="9.2" x2="12" y2="12" stroke="#595959" stroke-width="2" stroke-linecap="round"/></svg>
<div class="hd" style="left:981px;top:736px">ASDATE3</div>
<svg class="abs" style="left:1097px;top:738px" width="14" height="14" viewBox="0 0 14 14"><circle cx="6" cy="6" r="4.3" fill="none" stroke="#595959" stroke-width="1.3"/><line x1="9.2" y1="9.2" x2="12" y2="12" stroke="#595959" stroke-width="2" stroke-linecap="round"/></svg>
<div class="hd" style="right:739px;top:736px">Statut</div>
<svg class="abs" style="left:1201px;top:738px" width="14" height="14" viewBox="0 0 14 14"><circle cx="6" cy="6" r="4.3" fill="none" stroke="#595959" stroke-width="1.3"/><line x1="9.2" y1="9.2" x2="12" y2="12" stroke="#595959" stroke-width="2" stroke-linecap="round"/></svg>
<div class="hd" style="right:539px;top:736px">Days not confirmed</div>
<svg class="abs" style="left:1401px;top:738px" width="14" height="14" viewBox="0 0 14 14"><circle cx="6" cy="6" r="4.3" fill="none" stroke="#595959" stroke-width="1.3"/><line x1="9.2" y1="9.2" x2="12" y2="12" stroke="#595959" stroke-width="2" stroke-linecap="round"/></svg>
<div class="hd" style="right:275px;top:736px">Regroupement de Production</div>
<svg class="abs" style="left:1665px;top:738px" width="14" height="14" viewBox="0 0 14 14"><circle cx="6" cy="6" r="4.3" fill="none" stroke="#595959" stroke-width="1.3"/><line x1="9.2" y1="9.2" x2="12" y2="12" stroke="#595959" stroke-width="2" stroke-linecap="round"/></svg>
<div class="hd" style="right:19px;top:736px">CO not confirmed &gt;5days</div>
<div class="cell" style="left:580px;top:772px">CO109139</div>
<div class="cell" style="left:788px;top:772px">VLE</div>
<div class="cell" style="left:981px;top:772px">02<span style="display:inline-block;width:4.3px;transform:scaleX(0.55);transform-origin:0 50%">/</span>06<span style="display:inline-block;width:4.3px;transform:scaleX(0.55);transform-origin:0 50%">/</span>2017</div>
<div class="cell" style="right:703px;top:772px">5</div>
<div class="cell" style="right:503px;top:772px">15</div>
<div class="cell" style="right:238px;top:772px">SLIMLANE</div>
<div class="cell" style="right:18px;top:772px">1</div>
<div class="cell" style="left:580px;top:805px">CO109433</div>
<div class="cell" style="left:788px;top:805px">HCE</div>
<div class="cell" style="left:981px;top:805px">12<span style="display:inline-block;width:4.3px;transform:scaleX(0.55);transform-origin:0 50%">/</span>06<span style="display:inline-block;width:4.3px;transform:scaleX(0.55);transform-origin:0 50%">/</span>2017</div>
<div class="cell" style="right:703px;top:805px">3</div>
<div class="cell" style="right:503px;top:805px">15</div>
<div class="cell" style="right:238px;top:805px">SLIMLANE</div>
<div class="cell" style="right:18px;top:805px">1</div>
<div class="cell" style="left:580px;top:838px">CO109448</div>
<div class="cell" style="left:788px;top:838px">GAD</div>
<div class="cell" style="left:981px;top:838px">13<span style="display:inline-block;width:4.3px;transform:scaleX(0.55);transform-origin:0 50%">/</span>06<span style="display:inline-block;width:4.3px;transform:scaleX(0.55);transform-origin:0 50%">/</span>2017</div>
<div class="cell" style="right:703px;top:838px">3</div>
<div class="cell" style="right:503px;top:838px">14</div>
<div class="cell" style="right:238px;top:838px">SLIMLANE</div>
<div class="cell" style="right:18px;top:838px">1</div>
<div class="cell" style="left:580px;top:871px">CO109515</div>
<div class="cell" style="left:788px;top:871px">IBE</div>
<div class="cell" style="left:981px;top:871px">14<span style="display:inline-block;width:4.3px;transform:scaleX(0.55);transform-origin:0 50%">/</span>06<span style="display:inline-block;width:4.3px;transform:scaleX(0.55);transform-origin:0 50%">/</span>2017</div>
<div class="cell" style="right:703px;top:871px">3</div>
<div class="cell" style="right:503px;top:871px">13</div>
<div class="cell" style="right:238px;top:871px">TRS</div>
<div class="cell" style="right:18px;top:871px">1</div>
<div class="cell" style="left:580px;top:904px">CO109577</div>
<div class="cell" style="left:788px;top:904px">SBK</div>
<div class="cell" style="left:981px;top:904px">16<span style="display:inline-block;width:4.3px;transform:scaleX(0.55);transform-origin:0 50%">/</span>06<span style="display:inline-block;width:4.3px;transform:scaleX(0.55);transform-origin:0 50%">/</span>2017</div>
<div class="cell" style="right:703px;top:904px">3</div>
<div class="cell" style="right:503px;top:904px">11</div>
<div class="cell" style="right:238px;top:904px">SLIMLANE</div>
<div class="cell" style="right:18px;top:904px">1</div>
<div class="cell" style="left:580px;top:937px">CO109484</div>
<div class="cell" style="left:788px;top:937px">DMZ</div>
<div class="cell" style="left:981px;top:937px">19<span style="display:inline-block;width:4.3px;transform:scaleX(0.55);transform-origin:0 50%">/</span>06<span style="display:inline-block;width:4.3px;transform:scaleX(0.55);transform-origin:0 50%">/</span>2017</div>
<div class="cell" style="right:703px;top:937px">3</div>
<div class="cell" style="right:503px;top:937px">8</div>
<div class="cell" style="right:238px;top:937px">SLIMLANE</div>
<div class="cell" style="right:18px;top:937px">1</div>
<div class="abs" style="left:1903px;top:764px;width:7px;height:138px;border-radius:4px;background:#b3b3b3"></div>
<div class="abs" style="left:1024px;top:756px;width:0;height:0;border-left:5px solid transparent;border-right:5px solid transparent;border-top:0;border-bottom:6px solid #7a7a7a"></div>
</body></html>
